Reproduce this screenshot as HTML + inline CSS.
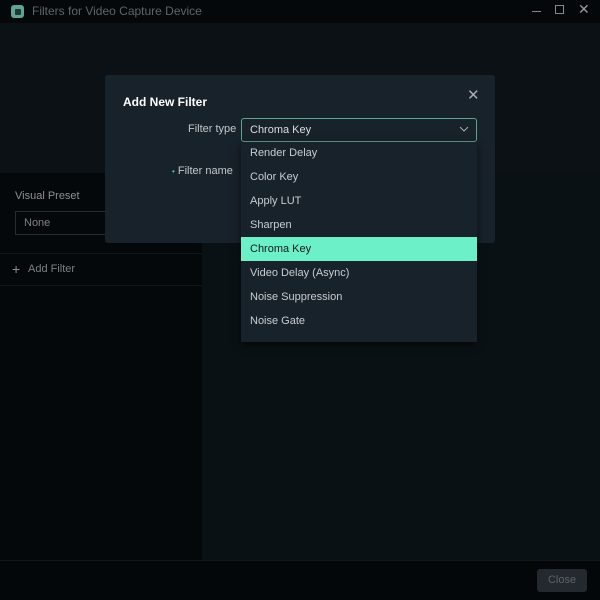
<!DOCTYPE html>
<html><head><style>
*{margin:0;padding:0;box-sizing:border-box}
body{width:600px;height:600px;background:#0a0f13;font-family:"Liberation Sans",sans-serif;position:relative;overflow:hidden;font-size:11px}
.a{position:absolute}
</style></head><body>
<div class="a" style="left:0;top:0;width:600px;height:23px;background:#05080b"></div>
<div class="a" style="left:11px;top:5px;width:13px;height:13px;border-radius:3px;background:#5fa590"></div>
<div class="a" style="left:15px;top:9px;width:6px;height:6px;border-radius:1px;background:#1d3a33"></div>
<div class="a" style="left:32px;top:4px;color:#5d6468;font-size:12px">Filters for Video Capture Device</div>
<div class="a" style="left:532px;top:11px;width:9px;height:1px;background:#888"></div>
<div class="a" style="left:555px;top:5px;width:9px;height:9px;border:1.5px solid #888"></div>
<div class="a" style="left:578px;top:1px;color:#999;font-size:14px">✕</div>
<div class="a" style="left:0;top:23px;width:600px;height:150px;background:#0b1115"></div>
<div class="a" style="left:0;top:173px;width:202px;height:387px;background:#04080b"></div>
<div class="a" style="left:202px;top:173px;width:398px;height:387px;background:#0a1115"></div>
<div class="a" style="left:15px;top:190px;color:#8a9094">Visual Preset</div>
<div class="a" style="left:15px;top:211px;width:100px;height:24px;border:1px solid #262d32;color:#7c8387;padding:5px 8px">None</div>
<div class="a" style="left:0;top:253px;width:202px;height:33px;border-top:1px solid #101619;border-bottom:1px solid #101619"></div>
<div class="a" style="left:12px;top:261px;color:#8a9094;font-size:14px">+</div>
<div class="a" style="left:28px;top:263px;color:#7a8084">Add Filter</div>
<div class="a" style="left:0;top:560px;width:600px;height:40px;background:#03070a;border-top:1px solid #111719"></div>
<div class="a" style="left:537px;top:569px;width:50px;height:23px;background:#23292e;border-radius:3px;color:#5d6468;text-align:center;line-height:23px">Close</div>
<div class="a" style="left:105px;top:75px;width:390px;height:168px;background:#18222a;border-radius:3px"></div>
<div class="a" style="left:123px;top:95px;color:#fff;font-weight:bold;font-size:12px">Add New Filter</div>
<div class="a" style="left:467px;top:86px;color:#aab;font-size:15px">✕</div>
<div class="a" style="left:188px;top:123px;color:#c3c8cb">Filter type</div>
<div class="a" style="left:172px;top:165px;color:#c3c8cb"><span style="color:#5fc9a8;font-size:8px">•</span> Filter name</div>
<div class="a" style="left:241px;top:118px;width:236px;height:24px;border:1.5px solid #5aa58e;border-radius:3px;background:#18222a;color:#d8dcde;padding:5px 8px">Chroma Key</div>
<svg class="a" style="left:459px;top:125px" width="10" height="8"><path d="M1 2 L5 6 L9 2" stroke="#aaa" fill="none"/></svg>
<div class="a" style="left:241px;top:142px;width:236px;height:200px;background:#18222b;box-shadow:0 3px 8px rgba(0,0,0,.6)"></div>
<div class="a" style="left:241px;top:237px;width:236px;height:24px;background:#6cf0c8"></div>
<div class="a" style="left:250px;top:141px;color:#c8cdd0;line-height:24px">Render Delay<br>Color Key<br>Apply LUT<br>Sharpen<br><span style="color:#0e1a17">Chroma Key</span><br>Video Delay (Async)<br>Noise Suppression<br>Noise Gate</div>
</body></html>
